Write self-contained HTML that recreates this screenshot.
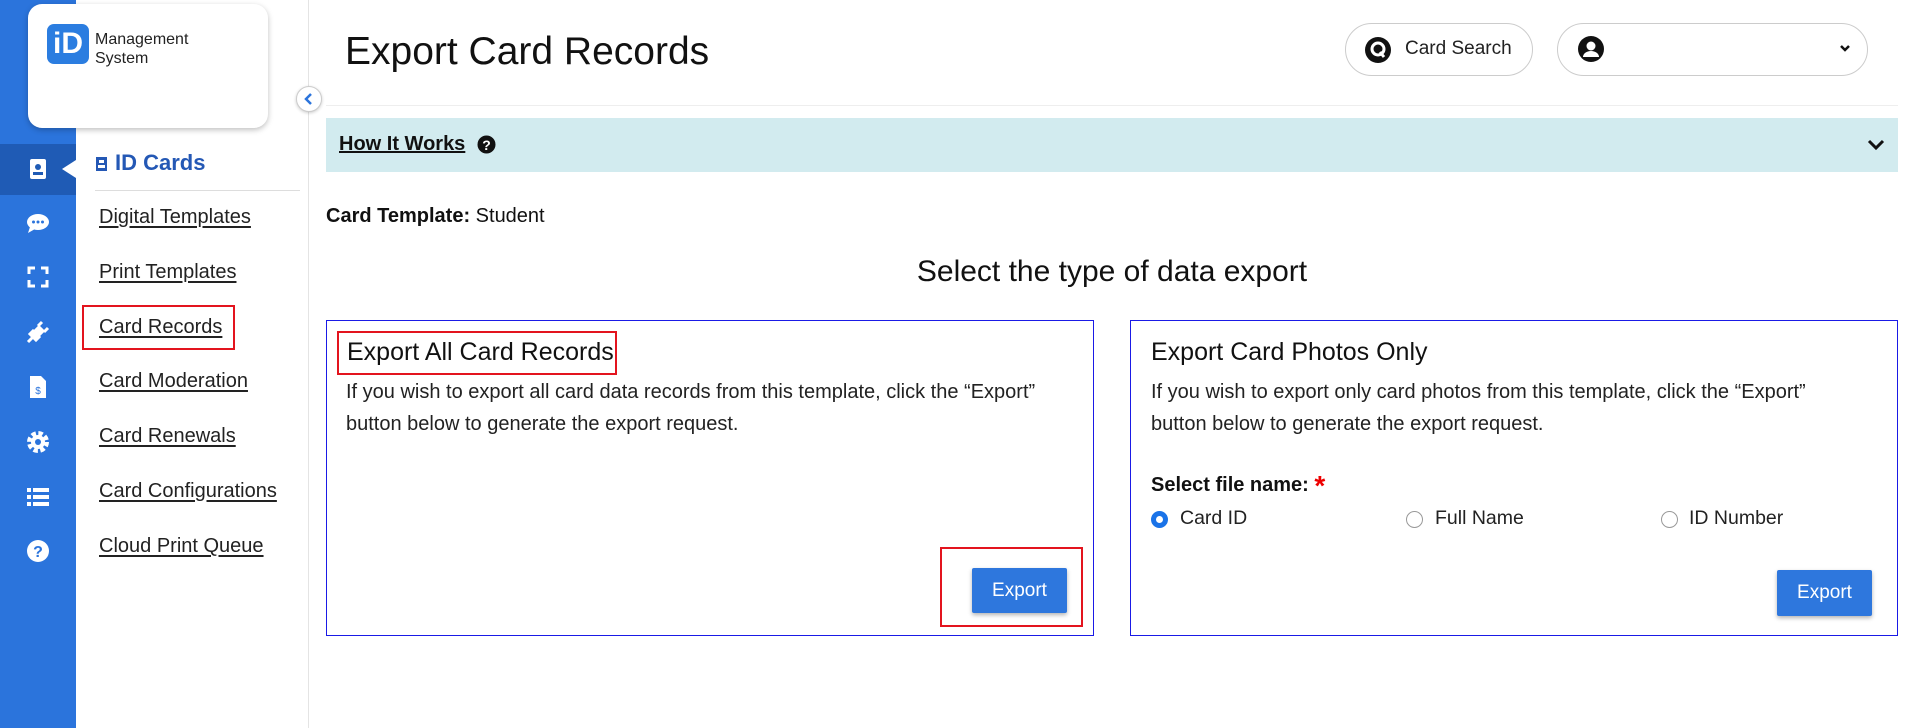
<!DOCTYPE html>
<html><head><meta charset="utf-8">
<style>
*{margin:0;padding:0;box-sizing:border-box}
body{width:1910px;height:728px;position:relative;overflow:hidden;background:#fff;font-family:"Liberation Sans",sans-serif;color:#111}
.a{position:absolute}
.side{left:0;top:0;width:76px;height:728px;background:#2b74dc}
.act{left:0;top:144px;width:76px;height:51px;background:#1f5bb5}
.ico{position:absolute;left:25px;width:26px;height:26px}
.logo{left:28px;top:4px;width:240px;height:124px;background:#fff;border-radius:14px;box-shadow:0 2px 6px rgba(0,0,0,.25)}
.sub{left:76px;top:0;width:233px;height:728px;background:#fff;border-right:1px solid #e4e4e4}
.lnk{position:absolute;left:99px;font-size:20px;color:#222;text-decoration:underline;text-underline-offset:3px;white-space:nowrap}
.box{border:1px solid #1a1ae6;background:#fff}
.btn{background:#2e77dd;color:#fff;font-size:19px;text-align:center;box-shadow:0 2px 4px rgba(0,0,0,.3);border-radius:2px}
.desc{font-size:20px;line-height:32px;color:#222;white-space:nowrap}
.rad{width:17px;height:17px;border-radius:50%;border:1px solid #999}
</style></head><body>
<div class="a side"></div>
<div class="a act"></div>
<div class="a" style="left:62px;top:160px;width:0;height:0;border-top:9px solid transparent;border-bottom:9px solid transparent;border-right:14px solid #fff"></div>
<svg class="ico" style="top:156px" viewBox="0 0 26 26"><rect x="5" y="3" width="16" height="20" rx="2" fill="#fff"/><circle cx="13" cy="11" r="3" fill="#1f5bb5"/><rect x="8" y="16" width="10" height="3" fill="#1f5bb5"/></svg>
<svg class="ico" style="top:210px" viewBox="0 0 26 26"><ellipse cx="13" cy="12" rx="11" ry="8" fill="#fff"/><path d="M5 17 L3 23 L10 19Z" fill="#fff"/><circle cx="8.5" cy="12" r="1.5" fill="#2b74dc"/><circle cx="13" cy="12" r="1.5" fill="#2b74dc"/><circle cx="17.5" cy="12" r="1.5" fill="#2b74dc"/></svg>
<svg class="ico" style="top:264px" viewBox="0 0 26 26"><path d="M4 10V4h6M16 4h6v6M22 16v6h-6M10 22H4v-6" stroke="#fff" stroke-width="3" fill="none"/></svg>
<svg class="ico" style="top:319px" viewBox="0 0 26 26"><path d="M3 23l6-6M17 3l-4 4M23 9l-4 4M8 12l6 6-3 3-6-6zM14 8l4 4-3 3-4-4z" stroke="#fff" stroke-width="3" fill="#fff"/></svg>
<svg class="ico" style="top:374px" viewBox="0 0 26 26"><path d="M5 2h11l5 5v17H5z" fill="#fff"/><text x="13" y="20" font-size="10" text-anchor="middle" fill="#2b74dc" font-family="Liberation Sans">$</text></svg>
<svg class="ico" style="top:429px" viewBox="0 0 26 26"><circle cx="13" cy="13" r="8" fill="none" stroke="#fff" stroke-width="6" stroke-dasharray="4 2.3"/><circle cx="13" cy="13" r="7" fill="#fff"/><circle cx="13" cy="13" r="3" fill="#2b74dc"/></svg>
<svg class="ico" style="top:484px" viewBox="0 0 26 26"><g fill="#fff"><rect x="2" y="4" width="4" height="4"/><rect x="8" y="4" width="16" height="4"/><rect x="2" y="11" width="4" height="4"/><rect x="8" y="11" width="16" height="4"/><rect x="2" y="18" width="4" height="4"/><rect x="8" y="18" width="16" height="4"/></g></svg>
<svg class="ico" style="top:538px" viewBox="0 0 26 26"><circle cx="13" cy="13" r="11" fill="#fff"/><text x="13" y="19" font-size="16" font-weight="bold" text-anchor="middle" fill="#2b74dc" font-family="Liberation Sans">?</text></svg>

<div class="a sub"></div>
<div class="a logo">
 <div class="a" style="left:19px;top:20px;width:42px;height:40px;background:#2b7de0;border-radius:7px;color:#fff;font-weight:bold;font-size:30px;line-height:40px;text-align:center">iD</div>
 <div class="a" style="left:67px;top:26px;font-size:16px;line-height:19px;color:#222">Management<br>System</div>
</div>
<div class="a" style="left:296px;top:86px;width:26px;height:26px;border-radius:50%;background:#fff;border:1px solid #ccc;box-shadow:0 1px 3px rgba(0,0,0,.2)"><svg width="24" height="24" viewBox="0 0 24 24"><path d="M14 7l-5 5 5 5" stroke="#2b74dc" stroke-width="2.5" fill="none"/></svg></div>
<svg class="a" style="left:95px;top:156px" width="13" height="16" viewBox="0 0 13 16"><rect x="1" y="1" width="11" height="14" fill="#2458b5"/><rect x="4" y="4" width="5" height="3" fill="#fff"/><rect x="3" y="9" width="7" height="3" fill="#fff"/></svg>
<div class="a" style="left:115px;top:150px;font-size:22px;font-weight:bold;color:#2458b5">ID Cards</div>
<div class="a" style="left:95px;top:190px;width:205px;height:1px;background:#ddd"></div>
<div class="lnk" style="top:206px">Digital Templates</div>
<div class="lnk" style="top:261px">Print Templates</div>
<div class="lnk" style="top:316px">Card Records</div>
<div class="a" style="left:82px;top:305px;width:153px;height:45px;border:2px solid #e3141e"></div>
<div class="lnk" style="top:370px">Card Moderation</div>
<div class="lnk" style="top:425px">Card Renewals</div>
<div class="lnk" style="top:480px">Card Configurations</div>
<div class="lnk" style="top:535px">Cloud Print Queue</div>

<div class="a" style="left:345px;top:30px;font-size:39px;color:#111">Export Card Records</div>
<div class="a" style="left:1345px;top:23px;width:188px;height:53px;border:1px solid #ccc;border-radius:27px"></div>
<svg class="a" style="left:1364px;top:36px" width="28" height="28" viewBox="0 0 28 28"><circle cx="14" cy="14" r="13" fill="#111"/><circle cx="14" cy="13" r="6" fill="none" stroke="#fff" stroke-width="3"/><path d="M16 16l4 5" stroke="#fff" stroke-width="3"/></svg>
<div class="a" style="left:1405px;top:38px;font-size:19px;color:#222">Card Search</div>
<div class="a" style="left:1557px;top:23px;width:311px;height:53px;border:1px solid #ccc;border-radius:27px"></div>
<svg class="a" style="left:1577px;top:35px" width="28" height="28" viewBox="0 0 28 28"><circle cx="14" cy="14" r="13" fill="#111"/><circle cx="14" cy="11" r="4.5" fill="#fff"/><path d="M6 22a8 6 0 0 1 16 0" fill="#fff"/></svg>
<svg class="a" style="left:1838px;top:42px" width="14" height="12" viewBox="0 0 14 12"><path d="M3 4l4 4 4-4" stroke="#111" stroke-width="2.5" fill="none"/></svg>
<div class="a" style="left:326px;top:105px;width:1572px;height:1px;background:#eee"></div>

<div class="a" style="left:326px;top:118px;width:1572px;height:54px;background:#d2ebef"></div>
<div class="a" style="left:339px;top:133px;font-size:20px;font-weight:bold;text-decoration:underline;color:#111">How It Works</div>
<svg class="a" style="left:477px;top:135px" width="19" height="19" viewBox="0 0 19 19"><circle cx="9.5" cy="9.5" r="9" fill="#111"/><text x="9.5" y="15" font-size="14" font-weight="bold" text-anchor="middle" fill="#fff" font-family="Liberation Sans">?</text></svg>
<svg class="a" style="left:1866px;top:137px" width="20" height="16" viewBox="0 0 20 16"><path d="M3 4l7 7 7-7" stroke="#111" stroke-width="3" fill="none"/></svg>

<div class="a" style="left:326px;top:205px;font-size:20px;color:#111"><b>Card Template:</b> Student</div>
<div class="a" style="left:0;top:255px;width:2224px;text-align:center;font-size:30px;color:#111">Select the type of data export</div>

<div class="a box" style="left:326px;top:320px;width:768px;height:316px"></div>
<div class="a" style="left:337px;top:331px;width:280px;height:44px;border:2px solid #e3141e"></div>
<div class="a" style="left:347px;top:338px;font-size:25px;color:#111">Export All Card Records</div>
<div class="a desc" style="left:346px;top:376px">If you wish to export all card data records from this template, click the “Export”<br>button below to generate the export request.</div>
<div class="a" style="left:940px;top:547px;width:143px;height:80px;border:2px solid #e3141e"></div>
<div class="a btn" style="left:972px;top:568px;width:95px;height:45px;line-height:45px">Export</div>

<div class="a box" style="left:1130px;top:320px;width:768px;height:316px"></div>
<div class="a" style="left:1151px;top:338px;font-size:25px;color:#111">Export Card Photos Only</div>
<div class="a desc" style="left:1151px;top:376px">If you wish to export only card photos from this template, click the “Export”<br>button below to generate the export request.</div>
<div class="a" style="left:1151px;top:466px;font-size:20px;font-weight:bold;color:#111">Select file name: <span style="color:#e00;font-size:28px;position:relative;top:4px">*</span></div>
<div class="a rad" style="left:1151px;top:511px;border:5px solid #1a73e8"></div>
<div class="a" style="left:1180px;top:507px;font-size:19.5px;color:#222">Card ID</div>
<div class="a rad" style="left:1406px;top:511px"></div>
<div class="a" style="left:1435px;top:507px;font-size:19.5px;color:#222">Full Name</div>
<div class="a rad" style="left:1661px;top:511px"></div>
<div class="a" style="left:1689px;top:507px;font-size:19.5px;color:#222">ID Number</div>
<div class="a btn" style="left:1777px;top:570px;width:95px;height:46px;line-height:46px">Export</div>
</body></html>
